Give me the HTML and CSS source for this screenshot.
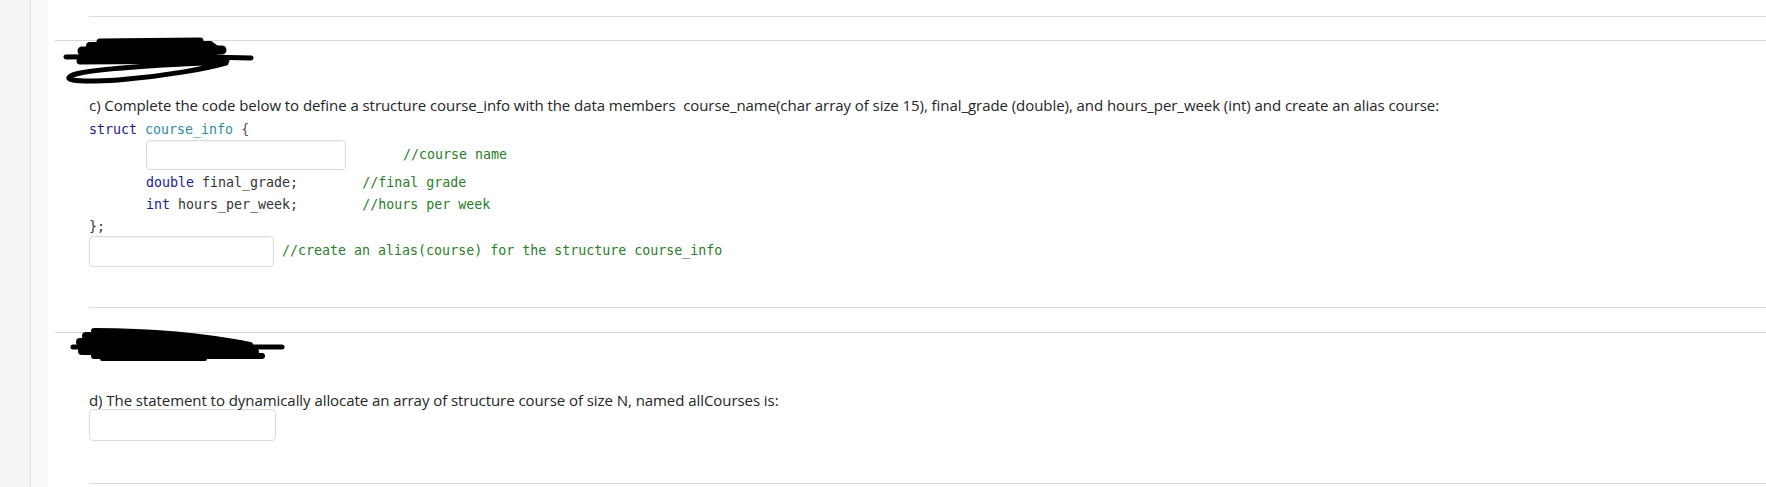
FILE: index.html
```html
<!DOCTYPE html>
<html lang="en">
<head>
<meta charset="utf-8">
<title>Quiz</title>
<link rel="stylesheet" href="styles.css">
</head>
<body>
<div class="app">
  <div class="rail"></div>
  <div class="gutter"></div>
  <main class="content">
    <div class="prev-tail"></div>

    <section class="question q-c">
      <svg class="redact redact-c" viewBox="60 36 200 50" width="200" height="50" aria-hidden="true">
        <g fill="none" stroke="#000" stroke-linecap="round" stroke-linejoin="round">
          <path d="M100 42 L200 41" stroke-width="7"/>
          <path d="M90 46 L210 45" stroke-width="8"/>
          <path d="M82 51 L222 50" stroke-width="9"/>
          <path d="M66 57 Q160 55 251 58" stroke-width="5"/>
          <path d="M80 61 L226 60" stroke-width="7"/>
          <path d="M105 48 L212 50" stroke-width="14"/>
          <path d="M224 62 C180 64 102 67 76 74 C60 79 70 83 118 80 C168 76 208 68 226 63" stroke-width="5"/>
        </g>
      </svg>
      <div class="q-body">
        <p class="q-text">c) Complete the code below to define a structure course_info with the data members&nbsp; course_name(char array of size 15), final_grade (double), and hours_per_week (int) and create an alias course:</p>
        <div class="code">
          <div class="code-line"><span class="kw">struct</span> <span class="type">course_info</span> <span class="punc">{</span></div>
          <div class="code-line blank-row indent"><span class="blank blank-name"></span><span class="cm cm-name">//course name</span></div>
          <div class="code-line indent"><span class="kw">double</span> final_grade;        <span class="cm">//final grade</span></div>
          <div class="code-line indent"><span class="kw">int</span> hours_per_week;        <span class="cm">//hours per week</span></div>
          <div class="code-line">};</div>
          <div class="code-line blank-row alias-row"><span class="blank blank-alias"></span> <span class="cm">//create an alias(course) for the structure course_info</span></div>
        </div>
        <div class="q-foot q-foot-c"></div>
      </div>
    </section>

    <section class="question q-d">
      <svg class="redact redact-d" viewBox="68 324 222 40" width="222" height="40" aria-hidden="true">
        <g fill="none" stroke="#000" stroke-linecap="round" stroke-linejoin="round">
          <path d="M94 331 Q180 331 250 345" stroke-width="6"/>
          <path d="M86 336 Q170 336 246 347" stroke-width="8"/>
          <path d="M80 342 L240 344" stroke-width="8"/>
          <path d="M73 347 L282 347" stroke-width="5"/>
          <path d="M82 351 L255 352" stroke-width="8"/>
          <path d="M94 356 L262 356" stroke-width="6"/>
          <path d="M102 359 L205 359" stroke-width="4"/>
        </g>
      </svg>
      <div class="q-body">
        <p class="q-text q-text-d">d) The statement to dynamically allocate an array of structure course of size N, named allCourses is:</p>
        <span class="blank blank-alloc"></span>
        <div class="q-foot q-foot-d"></div>
      </div>
    </section>
  </main>
</div>
</body>
</html>
```

FILE: styles.css
```css
html, body {
  margin: 0;
  padding: 0;
  background: #ffffff;
}

body {
  font-family: "Open Sans", "Noto Sans", sans-serif;
  color: #252525;
}

.app {
  display: flex;
  min-height: 487px;
  overflow: hidden;
}

.rail {
  width: 30px;
  flex: none;
  background: #f4f4f4;
  border-right: 1px solid #e2e2e2;
}

.gutter {
  width: 17px;
  flex: none;
  background: #fafafa;
}

.content {
  flex: 1;
  padding-left: 7px;
}

.prev-tail {
  height: 16px;
  margin-left: 34px;
  border-bottom: 1px solid #dcdcdc;
  margin-bottom: 23px;
}

.question {
  position: relative;
  border-top: 1px solid #d6d6d6;
}

.q-c {
  padding-top: 52px;
}

.q-d {
  margin-top: 24px;
  padding-top: 57px;
}

.redact {
  position: absolute;
  display: block;
}

.redact-c {
  left: 5px;
  top: -5px;
}

.redact-d {
  left: 13px;
  top: -9px;
}

.q-body {
  padding-left: 34px;
}

.q-text {
  margin: 0;
  font-size: 15px;
  line-height: 24px;
  letter-spacing: -0.06px;
  white-space: nowrap;
}

.q-text-d {
  line-height: 20px;
}

.code {
  margin-top: 2px;
  font-family: "DejaVu Sans Mono", "Liberation Mono", monospace;
  font-size: 13.3px;
  color: #333333;
}

.code-line {
  height: 22px;
  line-height: 22px;
  white-space: pre;
}

.indent {
  padding-left: 57px;
}

.blank-row {
  height: 32px;
  line-height: 30px;
  margin-top: -1px;
}

.alias-row {
  height: 31px;
  margin-top: -2px;
}

.kw {
  color: #1a1a8c;
}

.type {
  color: #2f8ba3;
}

.punc {
  color: #555555;
}

.cm {
  color: #2a7d2a;
}

.cm-name {
  margin-left: 57px;
}

.blank {
  display: inline-block;
  box-sizing: border-box;
  height: 30px;
  vertical-align: top;
  background: #ffffff;
  border: 1px solid #dadada;
  border-radius: 4px;
  box-shadow: inset 0 1px 1px rgba(0, 0, 0, 0.03);
}

.blank-alias {
  width: 185px;
  height: 31px;
}

.blank-name {
  width: 200px;
}

.blank-alloc {
  display: block;
  width: 187px;
  height: 32px;
  margin-top: -1px;
}

.q-foot {
  border-top: 1px solid #dcdcdc;
}

.q-foot-c {
  margin-top: 40px;
}

.q-foot-d {
  margin-top: 42px;
}
```
